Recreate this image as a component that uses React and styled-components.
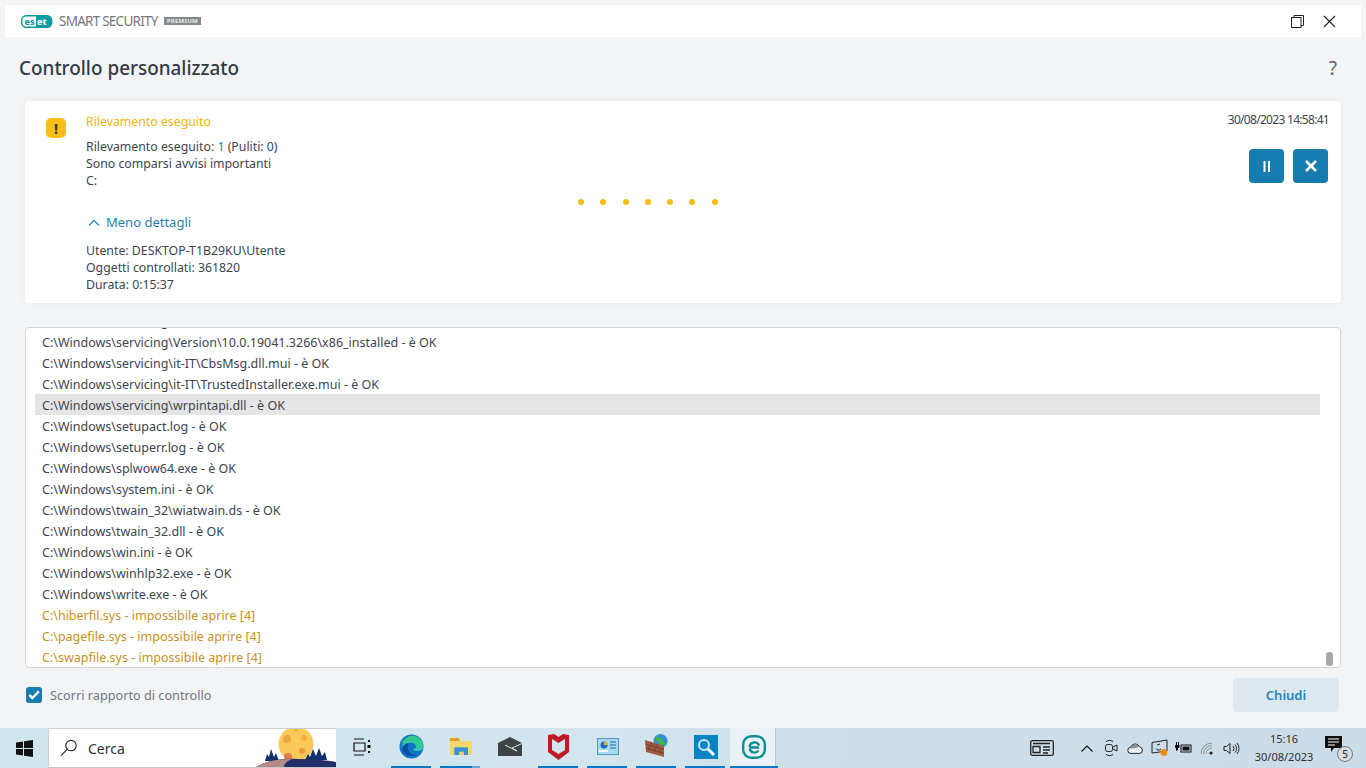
import React from "react";
import styled, { createGlobalStyle } from "styled-components";

const Global = createGlobalStyle`
  html, body { margin: 0; padding: 0; width: 1366px; height: 768px; overflow: hidden; background: #f3f4f6; }
  * { box-sizing: border-box; }
  body { font-family: "Noto Sans", "Open Sans", sans-serif; font-size: 12.3px; color: #3c4550; }
`;

const Page = styled.div`display:flex;flex-direction:column;width:1366px;height:768px;`;
const Window = styled.div`flex:1;display:flex;flex-direction:column;padding:5px 5px 0;height:728px;`;
const TitleBar = styled.div`height:32px;background:#fff;display:flex;align-items:center;padding-left:16px;color:#7b8087;`;
const Product = styled.span`font-size:13.5px;letter-spacing:-.75px;margin-left:6px;color:#72777d;`;
const Badge = styled.span`background:#85898e;color:#e8e9ea;font-size:6px;font-weight:700;height:8px;line-height:8px;padding:0 3px;margin-left:6px;letter-spacing:.3px;`;
const WinButtons = styled.div`margin-left:auto;display:flex;gap:19px;padding-right:25px;align-items:center;color:#222;`;
const Content = styled.div`flex:1;display:flex;flex-direction:column;padding:0 20px 0;`;
const Heading = styled.div`height:64px;padding-bottom:2px;display:flex;align-items:center;justify-content:space-between;margin:0 0 0 -6px;`;
const H1 = styled.h1`margin:0;font-size:18.9px;font-weight:500;color:#323a45;`;
const Help = styled.span`font-size:19px;color:#5d656e;font-weight:400;margin-right:4px;`;
const Card = styled.section`height:202px;background:#fff;border-radius:4px;box-shadow:0 0 6px rgba(60,70,80,.05);position:relative;display:flex;padding:12px 12px 0 21px;`;
const WarnIcon = styled.div`width:20px;height:20px;border-radius:5px;background:#fbbe18;color:#3a3a30;font-weight:800;font-size:14px;display:flex;align-items:center;justify-content:center;margin-top:5px;flex:none;`;
const Info = styled.div`margin-left:20px;display:flex;flex-direction:column;line-height:17px;`;
const Status = styled.div`color:#f5b50c;margin-bottom:8px;`;
const More = styled.div`display:flex;align-items:center;gap:6px;color:#1a7fb0;font-size:13px;margin:23px 0 10px;height:20px;svg{margin-left:2px;}`;
const Num = styled.span`color:#1a7fb0;`;
const Side = styled.div`margin-left:auto;display:flex;flex-direction:column;align-items:flex-end;`;
const Stamp = styled.div`line-height:14px;font-size:12px;letter-spacing:-.7px;`;
const Actions = styled.div`display:flex;gap:9px;margin-top:22px;margin-right:1px;`;
const ActionButton = styled.div`width:35px;height:34px;background:#177cb0;border-radius:4px;display:flex;align-items:center;justify-content:center;`;
const Dots = styled.div`position:absolute;left:553px;top:98px;display:flex;gap:16.3px;`;
const Dot = styled.i`width:6px;height:6px;border-radius:50%;background:#f8bd10;display:block;`;
const Log = styled.div`margin-top:24px;height:341px;background:#fff;border:1px solid #d3d5d8;border-radius:4px;overflow:hidden;position:relative;padding:0 20px 0 9px;font-size:12.5px;`;
const Row = styled.div`height:21px;line-height:23px;padding-left:7px;white-space:nowrap;color:${p=>p.$warn?"#c9901f":"#3c4550"};background:${p=>p.$sel?"#e5e5e5":"transparent"};`;
const Rows = styled.div`margin-top:-18px;`;
const Thumb = styled.div`position:absolute;right:7px;top:324px;width:7px;height:14px;border-radius:3px;background:#a9a9a9;`;
const Footer = styled.div`display:flex;align-items:center;height:60px;padding:0 2px 6px 1px;`;
const Check = styled.div`width:16px;height:16px;border-radius:3px;background:#177cb0;display:flex;align-items:center;justify-content:center;`;
const CheckLabel = styled.span`margin-left:8px;color:#6f7680;font-size:12.7px;`;
const Close = styled.div`margin-left:auto;width:106px;height:34px;border-radius:4px;background:#dfe8ef;color:#1f84bd;font-weight:600;font-size:13px;display:flex;align-items:center;justify-content:center;`;
const Taskbar = styled.div`height:40px;display:flex;align-items:stretch;background:linear-gradient(90deg,#cfe6ef 0%,#d3e5ee 45%,#cfdfea 60%,#cbdce9 100%);`;
const Start = styled.div`width:48px;display:flex;align-items:center;justify-content:center;`;
const Search = styled.div`width:288px;background:#fff;border:1px solid #c9d0d4;border-bottom-color:#c5cbd0;border-right:0;display:flex;align-items:center;position:relative;overflow:hidden;padding-left:11px;`;
const SearchText = styled.span`margin-left:10px;font-size:14px;color:#333;`;
const Art = styled.svg`position:absolute;right:0;bottom:0;`;
const Slot = styled.div`width:${p=>p.$w||49}px;display:flex;align-items:center;justify-content:center;position:relative;padding-bottom:3px;
  ${p=>p.$active?"background:linear-gradient(#eaf2f6,#eaf2f6) left/45px 100% no-repeat,linear-gradient(#b8c8d2,#b8c8d2) 45px 0/1px 100% no-repeat;":""}
  ${p=>p.$on?`&::after{content:"";position:absolute;left:${p.$active?0:4}px;right:${p.$active?0:5}px;bottom:0;height:2px;background:${p.$stack?"linear-gradient(90deg,#0a78c8 80%,#6aa8dc 80%)":"#0a78c8"};}`:""}`;
const Tray = styled.div`margin-left:auto;display:flex;align-items:center;padding-right:8px;`;
const NewsIcon = styled.div`width:30px;margin-right:18px;display:flex;justify-content:center;align-items:center;`;
const TrayIcon = styled.div`width:24px;display:flex;justify-content:center;align-items:center;`;
const Clock = styled.div`width:64px;margin-left:9px;text-align:center;font-size:11px;line-height:18px;color:#2a2f33;`;
const Notify = styled.div`width:42px;height:40px;position:relative;display:flex;align-items:center;justify-content:center;svg{margin:-8px 0 0 -8px;}`;
const Count = styled.span`position:absolute;left:21px;top:18px;width:16px;height:16px;border-radius:50%;background:#d8dde0;border:1px solid #777;font-size:10px;line-height:14px;text-align:center;color:#222;`;

const rows = [
  ["C:\\Windows\\servicing\\Version\\10.0.19041.3266\\amd64_installed - è OK"],
  ["C:\\Windows\\servicing\\Version\\10.0.19041.3266\\x86_installed - è OK"],
  ["C:\\Windows\\servicing\\it-IT\\CbsMsg.dll.mui - è OK"],
  ["C:\\Windows\\servicing\\it-IT\\TrustedInstaller.exe.mui - è OK"],
  ["C:\\Windows\\servicing\\wrpintapi.dll - è OK", "sel"],
  ["C:\\Windows\\setupact.log - è OK"],
  ["C:\\Windows\\setuperr.log - è OK"],
  ["C:\\Windows\\splwow64.exe - è OK"],
  ["C:\\Windows\\system.ini - è OK"],
  ["C:\\Windows\\twain_32\\wiatwain.ds - è OK"],
  ["C:\\Windows\\twain_32.dll - è OK"],
  ["C:\\Windows\\win.ini - è OK"],
  ["C:\\Windows\\winhlp32.exe - è OK"],
  ["C:\\Windows\\write.exe - è OK"],
  ["C:\\hiberfil.sys - impossibile aprire [4]", "warn"],
  ["C:\\pagefile.sys - impossibile aprire [4]", "warn"],
  ["C:\\swapfile.sys - impossibile aprire [4]", "warn"],
];

const EsetLogo = () => (
  <svg width="32" height="13" viewBox="0 0 32 13">
    <rect x=".7" y=".7" width="30" height="11.6" rx="4.5" fill="#fff" stroke="#0d9aa0" strokeWidth="1.4"/>
    <path d="M15 1h11a4.500 4.500 0 0 1 4.500 4.500v2a4.500 4.500 0 0 1-4.500 4.500H15z" fill="#0d9aa0"/>
    <text x="3.500" y="9.600" fontSize="9" fontWeight="800" fontFamily="Noto Sans" fill="#0d9aa0">es</text>
    <text x="16" y="9.600" fontSize="9" fontWeight="800" fontFamily="Noto Sans" fill="#fff">et</text>
  </svg>
);

export default function App() {
  return (
    <Page>
      <Global />
      <Window>
        <TitleBar>
          <EsetLogo />
          <Product>SMART SECURITY</Product>
          <Badge>PREMIUM</Badge>
          <WinButtons>
            <svg width="13" height="13" viewBox="0 0 13 13" fill="none" stroke="#222" strokeWidth="1"><rect x=".5" y="2.500" width="9.500" height="10"/><path d="M3 2.500V.5h9.500v10H10"/></svg>
            <svg width="13" height="13" viewBox="0 0 13 13" fill="none" stroke="#222" strokeWidth="1.1"><path d="M1 1l11 11M12 1L1 12"/></svg>
          </WinButtons>
        </TitleBar>
        <Content>
          <Heading>
            <H1>Controllo personalizzato</H1>
            <Help>?</Help>
          </Heading>
          <Card>
            <WarnIcon>!</WarnIcon>
            <Info>
              <Status>Rilevamento eseguito</Status>
              <div>Rilevamento eseguito: <Num>1</Num> (Puliti: 0)</div>
              <div>Sono comparsi avvisi importanti</div>
              <div>C:</div>
              <More>
                <svg width="12" height="7" viewBox="0 0 12 7" fill="none" stroke="#1a7fb0" strokeWidth="1.2"><path d="M1 6.300l5-5 5 5"/></svg>
                Meno dettagli
              </More>
              <div>Utente: DESKTOP-T1B29KU\Utente</div>
              <div>Oggetti controllati: 361820</div>
              <div>Durata: 0:15:37</div>
            </Info>
            <Side>
              <Stamp>30/08/2023 14:58:41</Stamp>
              <Actions>
                <ActionButton>
                  <svg width="8" height="11" viewBox="0 0 8 11" fill="#fff"><rect x="0.5" width="2" height="11"/><rect x="5" width="2" height="11"/></svg>
                </ActionButton>
                <ActionButton>
                  <svg width="12" height="12" viewBox="0 0 12 12" fill="none" stroke="#fff" strokeWidth="2.600"><path d="M1 1l10 10M11 1L1 11"/></svg>
                </ActionButton>
              </Actions>
            </Side>
            <Dots>{[0,1,2,3,4,5,6].map(i => <Dot key={i} />)}</Dots>
          </Card>
          <Log>
            <Rows>
              {rows.map(([t, k], i) => <Row key={i} $warn={k === "warn"} $sel={k === "sel"}>{t}</Row>)}
            </Rows>
            <Thumb />
          </Log>
          <Footer>
            <Check>
              <svg width="12" height="10" viewBox="0 0 12 10" fill="none" stroke="#fff" strokeWidth="2.400"><path d="M1.200 5l3.200 3L10.800 1.400"/></svg>
            </Check>
            <CheckLabel>Scorri rapporto di controllo</CheckLabel>
            <Close>Chiudi</Close>
          </Footer>
        </Content>
      </Window>
      <Taskbar>
        <Start>
          <svg width="17" height="17" viewBox="0 0 17 17" fill="#111"><path d="M0 2.400l7-1V8H0zM8 1.200L17 0v8H8zM0 9h7v6.600l-7-1zM8 9h9v8l-9-1.300z"/></svg>
        </Start>
        <Search>
          <svg width="18" height="18" viewBox="0 0 18 18" fill="none" stroke="#222" strokeWidth="1.1"><circle cx="11" cy="6.600" r="5.200"/><path d="M7.200 10.400L1 16.600"/></svg>
          <SearchText>Cerca</SearchText>
          <Art width="80" height="40" viewBox="0 0 80 40">
            <circle cx="40" cy="17" r="17.500" fill="#fbc95a"/>
            <circle cx="31" cy="12" r="4" fill="#eda93c"/><circle cx="48" cy="11" r="3" fill="#f0b040"/><circle cx="46" cy="24" r="3" fill="#ec9a40"/><circle cx="40" cy="3" r="1.600" fill="#eda93c"/><circle cx="32" cy="30" r="4" fill="#e07a50"/>
            <path d="M9 34l2-7 2 3 2-8 3 8 2-4 3 8zM49 33l3-6 2 3 3-8 3 7 3-8 3 8 3-4 2 8z" fill="#12306e"/>
            <path d="M0 40c12-7 28-9 42-8 14 0 28 1 38 3v5z" fill="#22306a"/>
            <path d="M0 40c12-7 24-8 36-8-6 3-8 5-8 8z" fill="#b58a86"/>
          </Art>
        </Search>
        <Slot $w={51}>
          <svg width="20" height="18" viewBox="0 0 20 18" fill="none" stroke="#111" strokeWidth="1.200"><path d="M2 1h10M2 17h10M2 5h11v8H2z"/><rect x="16" y="2" width="2" height="2" fill="#111" stroke="none"/><rect x="15.500" y="7" width="3" height="3" fill="#111" stroke="none"/><rect x="16" y="13" width="2" height="2" fill="#111" stroke="none"/></svg>
        </Slot>
        <Slot $on>
          <svg width="25" height="25" viewBox="0 0 25 25"><circle cx="12.500" cy="12.500" r="12" fill="#0f74c4"/><path d="M3 12C4 5 10 1 15 2c5 1 9 5 9 11 0 3-3 4-7 4-2 0-3-1-3-2 2 0 3-1 3-2 0-3-3-5-6-4-4 1-6 5-5 9C4 17 3 15 3 12z" fill="#35c1b0"/><path d="M24 12c0-6-5-10-10-10C8 2 3 6 2 10c3-3 7-4 10-3 4 1 6 3 6 5z" fill="#2fd07a" opacity=".7"/><path d="M9 14c0 4 3 7 8 7-7 3-13-1-14-7 1-3 4-5 7-5-1 1-1 3-1 5z" fill="#0a4aa0"/></svg>
        </Slot>
        <Slot $on $stack>
          <svg width="22" height="17" viewBox="0 0 22 17"><path d="M0 0h9l1 3H0z" fill="#e3a417"/><rect y="3" width="22" height="14" fill="#fcd667"/><path d="M4.300 17V9.300h13.700V17h-4.300v-3.300H9.300V17z" fill="#3a8fd6"/></svg>
        </Slot>
        <Slot>
          <svg width="24" height="19" viewBox="0 0 24 19"><path d="M0 6L12 0l12 6v13H0z" fill="#3e4446"/><path d="M7 8l12 6-5-3 10-4.500" fill="none" stroke="#dbe8ef"/></svg>
        </Slot>
        <Slot $on>
          <svg width="21" height="26" viewBox="0 0 21 26"><path d="M0 1l6-1 4.500 3L15 0l6 1v17l-10.500 8L0 18z" fill="#bd1c24"/><path d="M4 5l6.500 4L17 5v11l-6.500 4L4 16z" fill="#d4e5ee"/></svg>
        </Slot>
        <Slot $on>
          <svg width="22" height="17" viewBox="0 0 22 17"><rect x=".5" y=".5" width="21" height="16" fill="#a7d8f0" stroke="#4f9ac4"/><circle cx="7" cy="7" r="3.500" fill="#1f6fb8"/><path d="M7 7V3.500A3.500 3.500 0 0 1 10.500 7z" fill="#f5a830"/><path d="M13 4h6M13 7h6M13 10h6" stroke="#1f6fb8"/><rect x="2" y="12" width="9" height="2" fill="#fff"/></svg>
        </Slot>
        <Slot $on>
          <svg width="24" height="25" viewBox="0 0 24 25"><circle cx="15.500" cy="7" r="7" fill="#2f8fd8"/><path d="M11 3c3-1 5 1 6 3s4 2 4 5c-4 2-10-2-10-8z" fill="#49b04a"/><path d="M0 6l19 6v11L1 18z" fill="#a05a42"/><path d="M.5 10l18.500 5.500M1 14l18 5.500M6 8v4M12 10v4M4 12v4M10 14v4M15 15v4" stroke="#6e3a2a" strokeWidth=".8" fill="none"/></svg>
        </Slot>
        <Slot $on>
          <svg width="24" height="24" viewBox="0 0 24 24"><rect width="24" height="24" fill="#0583c5"/><circle cx="10" cy="10" r="5" fill="none" stroke="#cfe6f4" strokeWidth="2"/><path d="M14 14l6 6" stroke="#fff" strokeWidth="3"/></svg>
        </Slot>
        <Slot $on $active $w={48}>
          <svg width="24" height="24" viewBox="0 0 24 24" fill="none"><rect x="1.200" y="1.200" width="21.600" height="21.600" rx="8" stroke="#0c8f93" strokeWidth="2.400"/><path d="M17 12.500H7.500M7.500 12a5 5 0 0 1 9.600-1.500M7.600 13.500A5 5 0 0 0 16.500 15.600" stroke="#0c8f93" strokeWidth="2.400"/></svg>
        </Slot>
        <Tray>
          <NewsIcon>
            <svg width="24" height="16" viewBox="0 0 24 16" fill="none" stroke="#222" strokeWidth="1.300"><rect x=".7" y=".7" width="22.600" height="14.600" rx="1.500"/><path d="M3 3.500h17M3 12.500h7V6.500H3zM13 7h7M13 10h7M13 13h5"/></svg>
          </NewsIcon>
          <TrayIcon>
            <svg width="12" height="7" viewBox="0 0 12 7" fill="none" stroke="#111" strokeWidth="1.100"><path d="M.5 6.500l5.500-5.500 5.500 5.500"/></svg>
          </TrayIcon>
          <TrayIcon>
            <svg width="14" height="18" viewBox="0 0 14 18" fill="none" stroke="#222" strokeWidth="1"><rect x="1.500" y="5.500" width="7" height="7" rx="2"/><path d="M9 8l4-2v6l-4-2M2 2.500c2-1.500 5-1.500 7 0M2 15.500c2 1.500 5 1.500 7 0"/></svg>
          </TrayIcon>
          <TrayIcon>
            <svg width="17" height="11" viewBox="0 0 17 11"><path d="M4 10.400a3 3 0 0 1-.4-6 4.800 4.800 0 0 1 9-.6 3.400 3.400 0 0 1 .4 6.600z" fill="#eef2f4" stroke="#222"/><path d="M3.800 5.400a4.600 4.600 0 0 1 8.800-1.300c-3 .2-3.500 1.600-8.800 1.300z" fill="#8b9093"/></svg>
          </TrayIcon>
          <TrayIcon>
            <svg width="17" height="18" viewBox="0 0 17 18" fill="none" stroke="#222"><path d="M1 3.500L16 1v11L1 14z"/><path d="M6 6l3-1M5 9.500c1 2 3 2 5 .5" strokeWidth="1"/><circle cx="13" cy="13.500" r="3.400" fill="#f08c10" stroke="none"/></svg>
          </TrayIcon>
          <TrayIcon>
            <svg width="17" height="12" viewBox="0 0 17 12" fill="#111"><rect x="6" y="3" width="10" height="7" fill="none" stroke="#111"/><rect x="7.500" y="4.500" width="7" height="4"/><path d="M0 1v2h1V0h1v3h1V0h1v3h.5v3H3v2l-2 1V6H0V3"/></svg>
          </TrayIcon>
          <TrayIcon>
            <svg width="14" height="13" viewBox="0 0 14 13" fill="none" stroke="#8c9298"><path d="M1 12a11 11 0 0 1 11-11M3.500 12a8.500 8.500 0 0 1 8.500-8.500M6 12a6 6 0 0 1 6-6"/><circle cx="11" cy="11" r="1.600" fill="#222" stroke="none"/></svg>
          </TrayIcon>
          <TrayIcon>
            <svg width="17" height="13" viewBox="0 0 17 13" fill="none" stroke="#222"><path d="M1 4.500h2.500L7 1.500v10L3.500 8.500H1zM10 4a4 4 0 0 1 0 5M12 2.500a6 6 0 0 1 0 8M14 1a8.500 8.500 0 0 1 0 11"/></svg>
          </TrayIcon>
          <Clock>15:16<br />30/08/2023</Clock>
          <Notify>
            <svg width="17" height="16" viewBox="0 0 17 16" fill="#111"><path d="M0 0h17v12H9l-3 4v-4H0z"/><path d="M3 3h11M3 6h11M3 9h7" stroke="#fff"/></svg>
            <Count>5</Count>
          </Notify>
        </Tray>
      </Taskbar>
    </Page>
  );
}
